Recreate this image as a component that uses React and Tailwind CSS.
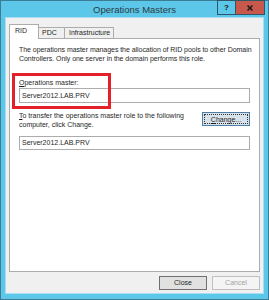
export default function App() {
  return (
    <div className="w-[269px] h-[300px] border border-[#3b7d95] bg-[#5dc7ea] flex flex-col font-['Liberation_Sans',Arial,sans-serif] text-[#1f1f1f]">
      <div className="relative h-[16px] shrink-0 flex">
        <div className="flex-1 text-center text-[9.5px] leading-[17px] text-[#2a3a40]">Operations Masters</div>
        <div className="absolute top-[-1px] right-[3px] flex h-[15px] border border-[#2f5566]">
          <div className="w-[18px] flex items-center justify-center text-[8px] font-bold text-[#111] border-r border-[#2f5566]">?</div>
          <div className="w-[28px] bg-[#c7584b] flex items-center justify-center">
            <svg width="6" height="6" viewBox="0 0 6 6">
              <path d="M0.5 0.5L5.5 5.5M5.5 0.5L0.5 5.5" stroke="#1a1a1a" strokeWidth="1.5" />
            </svg>
          </div>
        </div>
      </div>

      <div className="flex-1 mx-[4px] mb-[5px] border border-[#a9def0] bg-[#f0f0f0] flex flex-col px-[3px]">
        <div className="flex items-end mt-[6px] text-[7px] -mb-px">
          <div className="relative z-10 w-[30px] h-[15px] bg-white border border-b-0 border-[#acacac] pl-[5px] leading-[12px]">RID</div>
          <div className="w-[26px] h-[12px] bg-[#f0f0f0] border border-l-0 border-[#acacac] pl-[3px] leading-[10px]">PDC</div>
          <div className="w-[49px] h-[12px] bg-[#f0f0f0] border border-l-0 border-[#acacac] pl-[4px] leading-[10px]">Infrastructure</div>
        </div>

        <div className="relative flex-1 bg-white border border-[#acacac] px-[9px] pt-[6px] text-[7px] leading-[9px]">
          <p className="-mr-[8px] tracking-[-0.05px]">
            The operations master manages the allocation of RID pools to other Domain Controllers. Only one server in the domain performs this role.
          </p>
          <div className="mt-[15px]">
            <span className="underline">O</span>perations master:
          </div>
          <div className="mt-[1px] h-[15px] border border-[#acacac] px-[2px] leading-[13px]">Server2012.LAB.PRV</div>

          <div className="mt-[8px] flex justify-between items-start">
            <div>
              <div><span className="underline">T</span>o transfer the operations master role to the following</div>
              <div>computer, click Change.</div>
            </div>
            <div className="mt-[1px] w-[48px] h-[14px] border border-[#4f7fa6] bg-[#d7e2ea] p-[1px]">
              <div className="h-full border border-dotted border-[#333] flex items-center justify-center leading-none">
                <span><span className="underline">C</span>hange...</span>
              </div>
            </div>
          </div>

          <div className="mt-[7px] h-[14px] border border-[#acacac] px-[2px] leading-[12px]">Server2012.LAB.PRV</div>

          <div className="absolute left-[2px] top-[34px] w-[99px] h-[36px] border-[3px] border-[#e4202a]" />
        </div>

        <div className="flex justify-end gap-[5px] mt-[4px] mb-[3px] text-[7px]">
          <div className="w-[48px] h-[14px] border border-[#707070] bg-[#e1e1e1] flex items-center justify-center">Close</div>
          <div className="w-[48px] h-[14px] border border-[#bfbfbf] bg-[#f4f4f4] text-[#a3a3a3] flex items-center justify-center">Cancel</div>
        </div>
      </div>
    </div>
  );
}
